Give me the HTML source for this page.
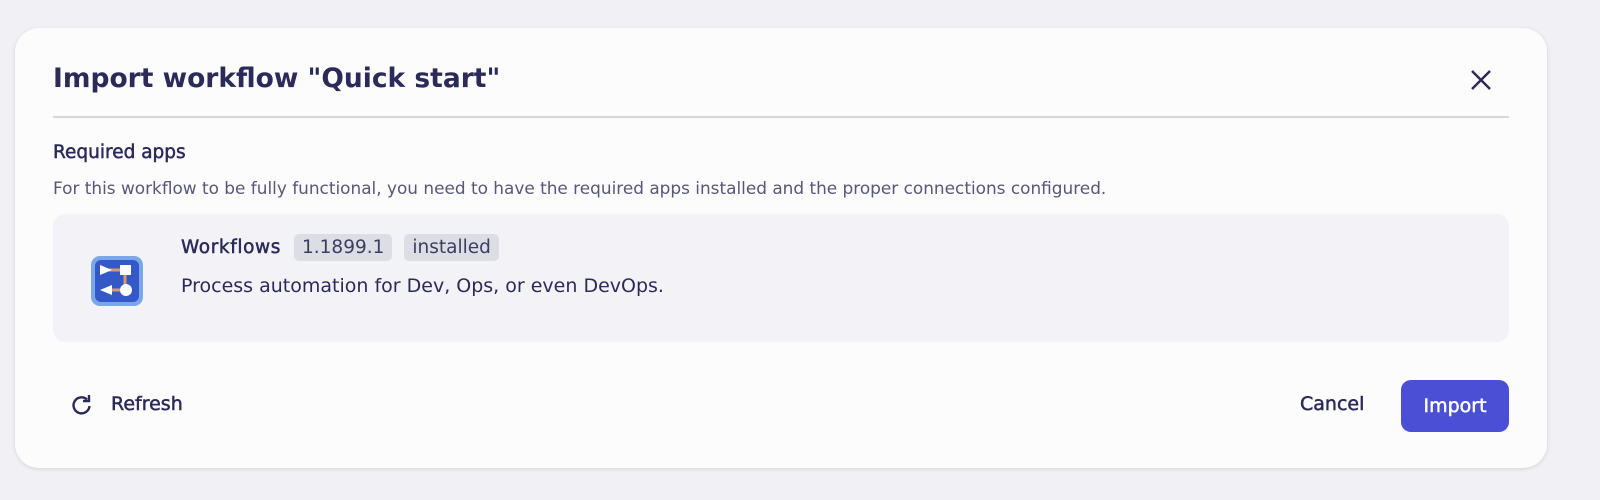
<!DOCTYPE html>
<html><head><style>
body{margin:0;width:1600px;height:500px;background:#f1f1f5;font-family:"DejaVu Sans","Liberation Sans",sans-serif;color:#2b2a58;overflow:hidden;position:relative}
.card{position:absolute;left:15px;top:28px;width:1532px;height:440px;background:#fcfcfd;border-radius:24px;box-shadow:0 1px 4px rgba(0,0,0,.12)}
.t{position:absolute;left:53px;top:63px;font-size:26.5px;font-weight:bold}
.hr{position:absolute;left:53px;top:116px;width:1456px;height:2px;background:#d6d6de}
.x{position:absolute;left:1468px;top:67px}
.m{-webkit-text-stroke:0.5px currentColor}
.h2{position:absolute;left:53px;top:142px;font-size:18.5px}
.d{position:absolute;left:53px;top:178px;font-size:16.9px;color:#575878}
.p{position:absolute;left:53px;top:214px;width:1456px;height:128px;background:#f2f2f7;border-radius:12px}
.n{position:absolute;left:181px;top:234px;font-size:18.5px;display:flex;align-items:center}
.b{background:#dcdde5;border-radius:5px;padding:3px 8px;margin-left:13px;color:#3c3d60}
.s{position:absolute;left:181px;top:275px;font-size:19px}
.btn{position:absolute;font-size:19px}
</style></head><body>
<div class="card"></div>
<div class="t">Import workflow "Quick start"</div>
<svg class="x" width="26" height="26" viewBox="0 0 26 26"><path d="M4 4L22 22M22 4L4 22" stroke="#2b2a58" stroke-width="2.4"/></svg>
<div class="hr"></div>
<div class="h2 m">Required apps</div>
<div class="d">For this workflow to be fully functional, you need to have the required apps installed and the proper connections configured.</div>
<div class="p"></div>
<svg style="position:absolute;left:91px;top:256px" width="52" height="50" viewBox="0 0 52 50">
<rect x="0" y="0" width="52" height="50" rx="9" fill="#7aa7ea"/>
<rect x="4" y="4" width="44" height="42" rx="6" fill="#3558c8"/>
<path d="M18 14H34V30" stroke="#d99a6a" stroke-width="3" fill="none"/>
<path d="M18 34H34" stroke="#d99a6a" stroke-width="3"/>
<path d="M9 9L21 14L9 19Z" fill="#fff"/>
<rect x="29" y="9" width="11" height="10" fill="#fff"/>
<path d="M9 34L21 29V39Z" fill="#fff"/>
<circle cx="35" cy="34" r="6" fill="#fff"/>
</svg>
<div class="n"><span class="m" style="letter-spacing:0.6px">Workflows</span><span class="b">1.1899.1</span><span class="b" style="margin-left:12px">installed</span></div>
<div class="s">Process automation for Dev, Ops, or even DevOps.</div>
<svg style="position:absolute;left:70px;top:393px" width="24" height="24" viewBox="0 0 24 24"><path d="M19.5 13A8 8 0 1 1 17 6.5" stroke="#2b2a58" stroke-width="2.4" fill="none"/><path d="M19 2V8H13" stroke="#2b2a58" stroke-width="2.4" fill="none"/></svg>
<div class="btn m" style="left:111px;top:393px">Refresh</div>
<div class="btn m" style="left:1300px;top:393px">Cancel</div>
<div class="btn m" style="left:1401px;top:380px;width:108px;height:52px;background:#4a4fd6;border-radius:10px;color:#fff;display:flex;align-items:center;justify-content:center">Import</div>
</body></html>
